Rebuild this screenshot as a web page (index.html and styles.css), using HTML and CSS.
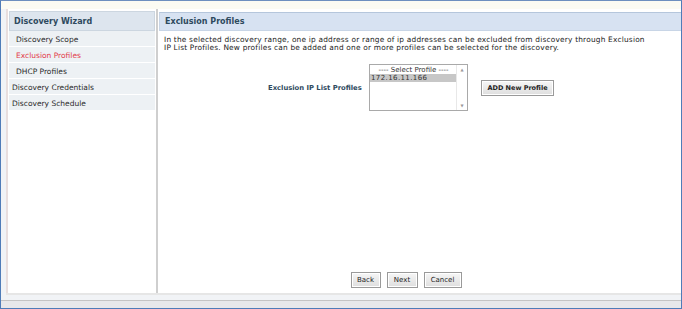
FILE: index.html
```html
<!DOCTYPE html>
<html>
<head>
<meta charset="utf-8">
<link rel="stylesheet" href="styles.css">
</head>
<body>
<div class="frame">
  <div class="topband"></div>
  <div class="main">
    <div class="side">
      <div class="side-head">Discovery Wizard</div>
      <div class="item sub">Discovery Scope</div>
      <div class="item sub active">Exclusion Profiles</div>
      <div class="item sub">DHCP Profiles</div>
      <div class="item">Discovery Credentials</div>
      <div class="item">Discovery Schedule</div>
    </div>
    <div class="content">
      <div class="content-head">Exclusion Profiles</div>
      <p class="desc">In the selected discovery range, one ip address or range of ip addresses can be excluded from discovery through Exclusion IP List Profiles. New profiles can be added and one or more profiles can be selected for the discovery.</p>
      <div class="form-row">
        <div class="label">Exclusion IP List Profiles</div>
        <div class="listbox">
          <div class="opts">
            <div class="opt">---- Select Profile ----</div>
            <div class="opt sel">172.16.11.166</div>
          </div>
          <div class="scroll">
            <span class="arr">&#9650;</span>
            <span class="arr">&#9660;</span>
          </div>
        </div>
        <div class="btn add">ADD New Profile</div>
      </div>
      <div class="spacer"></div>
      <div class="actions">
        <div class="btn">Back</div>
        <div class="btn">Next</div>
        <div class="btn">Cancel</div>
      </div>
    </div>
  </div>
  <div class="bottom"></div>
</div>
</body>
</html>
```
FILE: styles.css
```css
* { box-sizing: border-box; }
html, body { margin: 0; padding: 0; background: #fff; }
body { font-family: "DejaVu Sans", Verdana, sans-serif; font-size: 7px; color: #222; }
.frame {
  width: 682px; height: 309px;
  border: 1px solid #4f7cb8;
  border-top-color: #6d8fbf;
  background: #f1f3f6;
  display: flex; flex-direction: column;
}
.topband { height: 8px; background: #fbfbf3; flex: none; }
.main {
  flex: 1; display: flex; background: #fff;
  margin-left: 5px;
  border-bottom: 2px solid #e6e6e6;
}
.side {
  width: 152px; flex: none;
  border-left: 2px solid #e8dede;
  border-right: 2px solid #cfcfcf;
  padding: 2px 1px 0 1px;
}
.side-head {
  height: 20px; background: #dde5ee;
  border: 1px solid #ccd6e0;
  font-weight: bold; font-size: 8px; color: #2e4a5e;
  padding: 5px 0 0 4px;
}
.item {
  height: 16px; background: #edf1f4;
  border-bottom: 1px solid #fff;
  padding: 4px 0 0 3px;
  font-size: 7.5px;
  color: #2a2a2a;
}
.item.sub { padding-left: 7px; }
.item.active { color: #e23b4a; }
.content { flex: 1; display: flex; flex-direction: column; padding: 3px 0 0 1px; }
.content-head {
  height: 19px; background: #d7e2f2;
  border-top: 1px solid #b5c6dc;
  border-bottom: 1px solid #c8d5e6;
  border-left: 1px solid #c8d5e6;
  font-weight: bold; font-size: 8px; color: #2e4a5e;
  padding: 4px 0 0 5px;
}
.desc { margin: 5px 36px 0 5px; line-height: 8px; font-size: 7.4px; letter-spacing: 0.2px; color: #222; }
.form-row { display: flex; align-items: flex-start; margin-top: 12px; padding-left: 109px; }
.label { font-weight: bold; font-size: 6.8px; color: #2e4a5e; margin-top: 20px; width: 101px; }
.listbox {
  width: 99px; height: 47px; border: 1px solid #a9a9a9; display: flex; background: #fff;
}
.opts { flex: 1; padding-top: 1px; }
.opt { height: 8px; line-height: 8px; font-size: 7px; padding-left: 1px; color: #333; }
.opt:first-child { text-align: center; }
.opt.sel { background: #c7c7c7; letter-spacing: 0.4px; }
.scroll { width: 11px; border-left: 1px solid #e8e8e8; display: flex; flex-direction: column; justify-content: space-between; align-items: center; padding: 2px 0; }
.arr { font-size: 4px; color: #999; }
.btn {
  display: inline-block; height: 16px; border: 1px solid #9a9a9a;
  background: linear-gradient(#f6f6f6, #dedede);
  font-size: 7px; color: #222; white-space: nowrap; text-align: center;
  padding: 3px 5px 0; box-shadow: inset 0 0 0 1px #fff;
}
.btn.add { margin-left: 13px; margin-top: 16px; width: 73px; font-weight: bold; font-size: 6.5px; padding: 3px 0 0; }
.spacer { flex: 1; }
.actions { display: flex; justify-content: center; gap: 6px; margin-bottom: 5px; padding-right: 28px; }
.actions .btn:nth-child(1) { width: 30px; }
.actions .btn:nth-child(2) { width: 31px; }
.actions .btn:nth-child(3) { width: 38px; }
.bottom { height: 8px; flex: none; background: #e7e8ea; border-top: 1px solid #c4c4c4; margin-top: 5px; }
```
